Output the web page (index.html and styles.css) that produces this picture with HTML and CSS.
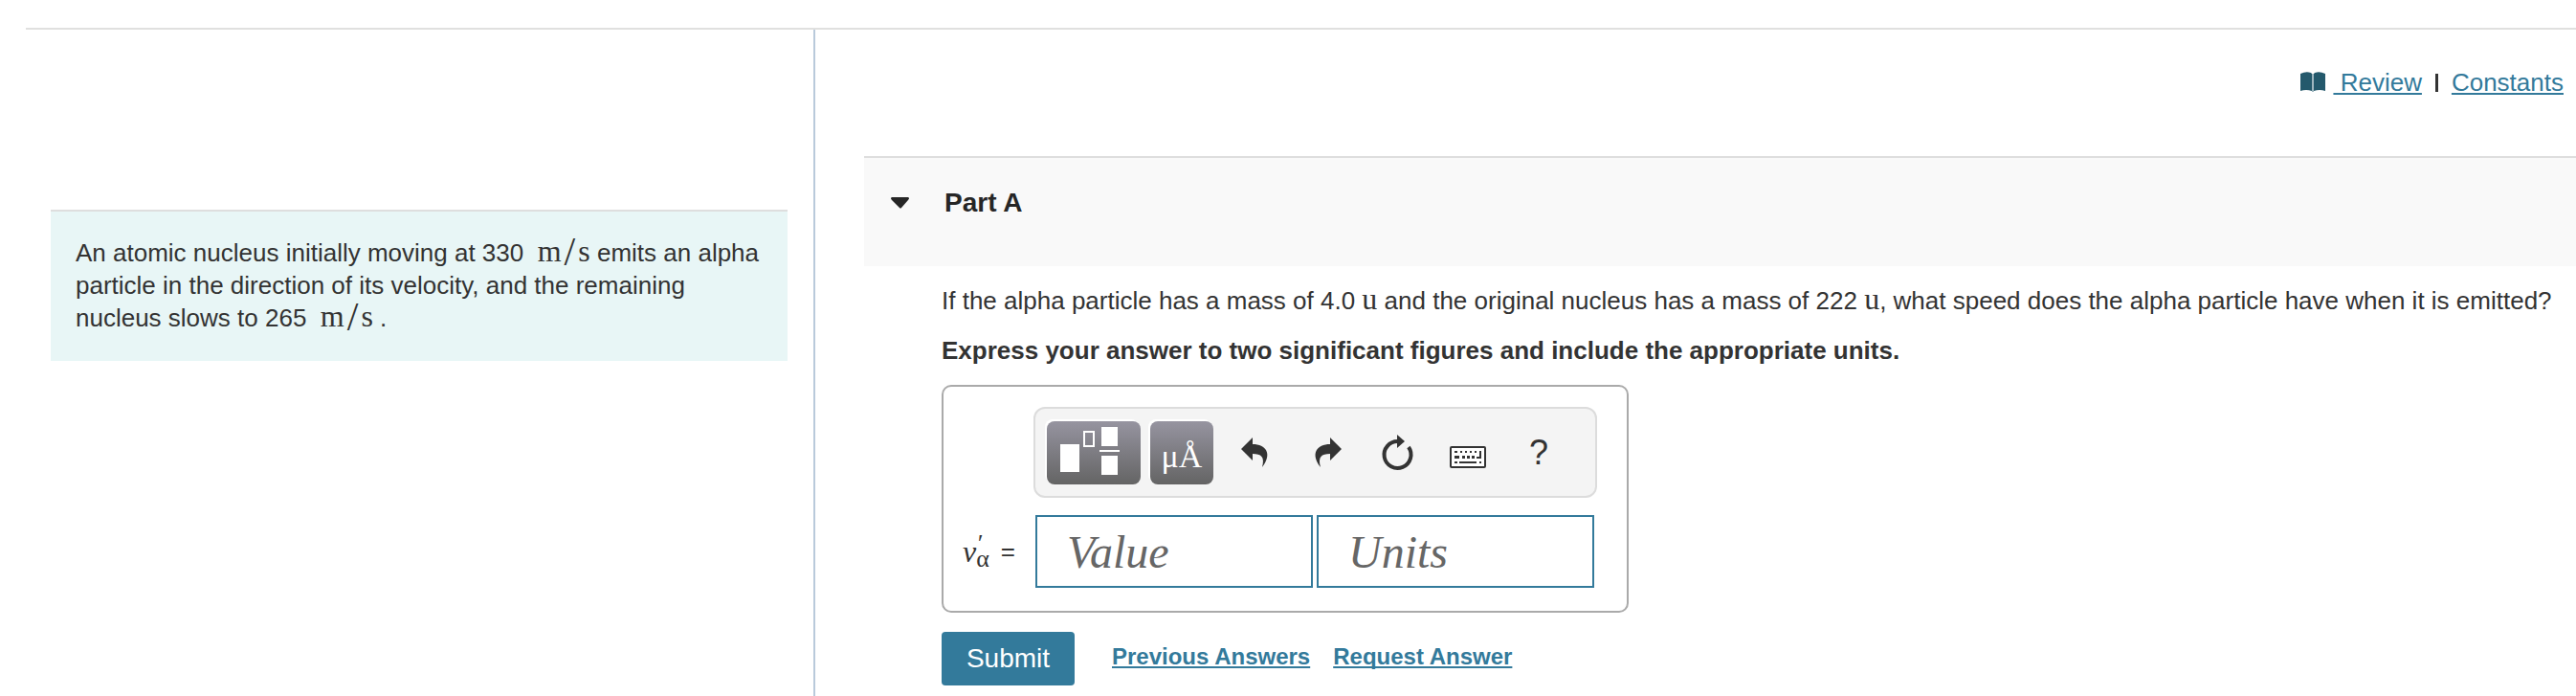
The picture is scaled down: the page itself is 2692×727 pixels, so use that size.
FILE: index.html
```html
<!DOCTYPE html>
<html lang="en">
<head>
    <meta charset="UTF-8">
    <meta name="viewport" content="width=device-width, initial-scale=1.0">
    <title>Part A</title>
    <link rel="stylesheet" href="styles.css">
</head>
<body>
    <div class="page">
        <aside class="sidebar">
            <div class="problem">
                An atomic nucleus initially moving at 330 &nbsp;<span class="math">m<span class="slash">/</span>s</span> emits an alpha particle in the direction of its velocity, and the remaining nucleus slows to 265 &nbsp;<span class="math">m<span class="slash">/</span>s</span> .
            </div>
        </aside>
        <main class="content">
            <nav class="tools">
                <svg class="book" width="26" height="22" viewBox="0 0 26 22">
                    <path d="M0 2Q6-1 11 1L12 2V20Q6 18 0 20ZM26 2Q20-1 15 1L14 2V20Q20 18 26 20Z" fill="#24596c"/>
                    <path d="M13 2V21" stroke="#9fb6bf" stroke-width="2"/>
                </svg>
                <a href="#">&nbsp;Review</a>
                <span class="divider"></span>
                <a href="#">Constants</a>
            </nav>
            <header class="part-header">
                <svg width="20" height="12" viewBox="0 0 20 12">
                    <path d="M1 0H18Q20 1 18 3L11 11Q10 12 9 11L1 3Q-1 1 1 0Z" fill="#262626"/>
                </svg>
                <h2>Part A</h2>
            </header>
            <form class="part-body">
                <p>If the alpha particle has a mass of 4.0 <span class="math">u</span> and the original nucleus has a mass of 222 <span class="math">u</span>, what speed does the alpha particle have when it is emitted?</p>
                <p class="instructions">Express your answer to two significant figures and include the appropriate units.</p>
                <div class="answer">
                    <div class="toolbar">
                        <button type="button" class="dark templates" aria-label="Templates">
                            <svg width="98" height="66" viewBox="0 0 98 66" fill="#fff">
                                <rect x="14" y="24" width="20" height="29"/>
                                <rect x="39" y="11" width="10" height="15" fill="none" stroke="#fff" stroke-width="2"/>
                                <rect x="57" y="6" width="17" height="20"/>
                                <rect x="55" y="30" width="21" height="2"/>
                                <rect x="57" y="36" width="17" height="20"/>
                            </svg>
                        </button>
                        <button type="button" class="dark symbols" aria-label="Symbols">μÅ</button>
                        <button type="button" class="icon" aria-label="Undo">
                            <svg width="40" height="40" viewBox="0 0 40 40">
                                <path d="M5 16L17 4V11C31 11 38 21 27 35C30 24 26 21 17 21V28Z" fill="#333"/>
                            </svg>
                        </button>
                        <button type="button" class="icon" aria-label="Redo">
                            <svg width="40" height="40" viewBox="0 0 40 40">
                                <path d="M36 16L24 4V11C10 11 3 21 14 35C11 24 15 21 24 21V28Z" fill="#333"/>
                            </svg>
                        </button>
                        <button type="button" class="icon" aria-label="Reset">
                            <svg width="40" height="40" viewBox="0 0 40 40">
                                <path d="M21 8A14 14 0 1 0 32 14" fill="none" stroke="#333" stroke-width="4"/>
                                <path d="M20 1L28 8L20 15Z" fill="#333"/>
                            </svg>
                        </button>
                        <button type="button" class="icon" aria-label="Keyboard">
                            <svg width="40" height="40" viewBox="0 0 40 40" fill="#333">
                                <rect x="2" y="14" width="36" height="21" rx="1" fill="#fff" stroke="#333" stroke-width="2"/>
                                <path d="M6 18h3v2h-3zM12 18h2v2h-2zM17 18h2v2h-2zM22 18h2v2h-2zM27 18h2v2h-2zM32 18h2v8h-5v-2h3zM6 23h5v3h-5zM14 23h3v3h-3zM19 23h3v3h-3zM24 23h3v3h-3zM6 29h3v2h-3zM11 29h18v2h-18zM32 29h2v2h-2z"/>
                            </svg>
                        </button>
                        <button type="button" class="icon" aria-label="Help">?</button>
                    </div>
                    <div class="entry">
                        <label class="variable" for="value"><i>v</i><span class="scripts"><i>′</i><span>α</span></span><span class="equals">=</span></label>
                        <input type="text" id="value" placeholder="Value">
                        <input type="text" id="units" placeholder="Units" aria-label="Units">
                    </div>
                </div>
                <div class="actions">
                    <button type="submit">Submit</button>
                    <a href="#">Previous Answers</a>
                    <a href="#">Request Answer</a>
                </div>
            </form>
        </main>
    </div>
</body>
</html>
```
FILE: styles.css
```css
* {
    box-sizing: border-box;
}
body {
    margin: 0;
    font-family: "Liberation Sans", Arial, sans-serif;
    font-size: 26px;
    line-height: 34px;
    color: #333;
    background: #fff;
}
a {
    color: #337a9b;
    text-decoration-thickness: 2px;
    text-underline-offset: 2px;
    text-decoration-skip-ink: none;
}
button {
    padding: 0;
    border: none;
    font-family: inherit;
    cursor: pointer;
}
.page {
    display: flex;
    min-height: calc(100vh - 29px);
    margin: 29px 0 0 27px;
    border-top: 2px solid #e0e0df;
}
.sidebar {
    width: 825px;
    padding: 188px 27px 0 26px;
    border-right: 2px solid #b9cadb;
    flex-shrink: 0;
}
.problem {
    padding: 26px 26px 28px;
    border-top: 2px solid #dedede;
    background: #e8f6f6;
}
.math {
    font-family: "Liberation Serif", "Times New Roman", serif;
    font-size: 32px;
    line-height: 26px;
}
.slash {
    padding: 0 3px;
    font-size: 42px;
    line-height: 20px;
    vertical-align: -4px;
}
.content {
    flex: 1;
    padding-left: 51px;
}
.tools {
    display: flex;
    justify-content: flex-end;
    align-items: center;
    height: 132px;
    padding: 0 13px 22px 0;
}
.book {
    margin-right: 8px;
}
.divider {
    width: 3px;
    height: 19px;
    margin: 0 14px;
    background: #333;
}
.part-header {
    display: flex;
    align-items: center;
    height: 115px;
    padding: 0 28px 20px;
    border-top: 2px solid #dedede;
    background: #f9f9f9;
}
.part-header h2 {
    margin: 0 0 0 36px;
    font-size: 28px;
    color: #262626;
}
.part-body {
    padding: 19px 0 0 81px;
}
.part-body p {
    margin: 0 0 18px;
}
.part-body .instructions {
    margin-bottom: 19px;
    font-weight: bold;
}
.answer {
    width: 718px;
    padding: 21px 31px 24px 20px;
    border: 2px solid #aaa;
    border-radius: 10px;
}
.toolbar {
    display: flex;
    align-items: center;
    gap: 10px;
    height: 95px;
    margin-left: 74px;
    padding: 0 12px;
    border: 2px solid #dcdcdc;
    border-radius: 12px;
    background: #f4f4f4;
}
.dark {
    height: 66px;
    border-radius: 8px;
    background: linear-gradient(#9694a0, #646464);
    box-shadow: -2px -2px 0 #fff;
    color: #fff;
}
.templates {
    width: 98px;
}
.templates svg {
    display: block;
}
.symbols {
    width: 66px;
    margin-right: 2px;
    padding-top: 8px;
    font-family: "Liberation Serif", "Times New Roman", serif;
    font-size: 34px;
}
.icon {
    width: 64px;
    height: 64px;
    background: none;
    color: #333;
    font-size: 36px;
}
.icon svg {
    display: block;
    margin: auto;
}
.entry {
    display: flex;
    align-items: center;
    gap: 4px;
    margin-top: 18px;
}
.variable {
    display: flex;
    align-items: center;
    width: 72px;
    font-family: "Liberation Serif", "Times New Roman", serif;
    font-size: 32px;
}
.scripts {
    display: flex;
    flex-direction: column;
    font-size: 26px;
    line-height: 16px;
}
.equals {
    margin-left: 12px;
    font-family: "Liberation Sans", Arial, sans-serif;
    font-size: 26px;
}
.entry input {
    width: 290px;
    height: 76px;
    padding: 0 31px;
    border: 2px solid #337a9b;
    font-family: "Liberation Serif", "Times New Roman", serif;
    font-size: 48px;
    font-style: italic;
    color: #333;
}
.entry input::placeholder {
    color: #666;
}
.actions {
    display: flex;
    align-items: center;
    gap: 24px;
    margin-top: 20px;
    font-size: 24px;
    font-weight: bold;
}
.actions a {
    padding-bottom: 4px;
}
.actions button {
    width: 139px;
    height: 56px;
    margin-right: 15px;
    border-radius: 4px;
    background: #337a9b;
    color: #fff;
    font-size: 28px;
}
```
